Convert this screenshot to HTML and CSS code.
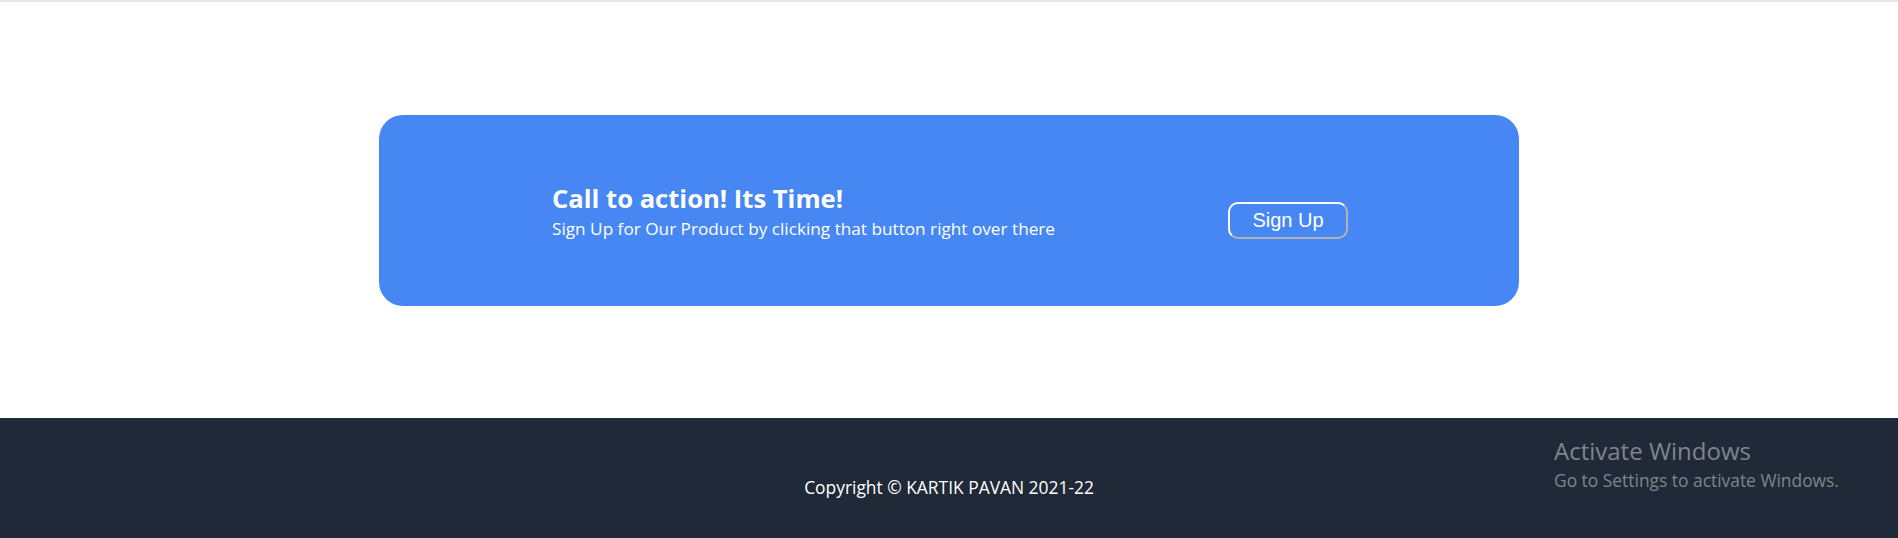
FILE: index.html
```html
<!DOCTYPE html>
<html lang="en">
<head>
<meta charset="utf-8">
<title>Call to action</title>
<link rel="stylesheet" href="styles.css">
</head>
<body>
<div class="topline"></div>
<main class="main">
  <section class="card">
    <div class="cta-text">
      <h2 class="cta-title">Call to action! Its Time!</h2>
      <p class="cta-sub">Sign Up for Our Product by clicking that button right over there</p>
    </div>
    <button class="cta-btn" type="button">Sign Up</button>
  </section>
</main>
<footer class="footer">
  <p class="copy">Copyright © KARTIK PAVAN 2021-22</p>
  <div class="watermark">
    <div class="wm-title">Activate Windows</div>
    <div class="wm-sub">Go to Settings to activate Windows.</div>
  </div>
</footer>
</body>
</html>
```

FILE: styles.css
```css
html, body {
  margin: 0;
  padding: 0;
}
body {
  font-family: "Open Sans", "Noto Sans", sans-serif;
  background: #ffffff;
  width: 1898px;
  height: 538px;
  overflow: hidden;
}
.topline {
  height: 2px;
  background: #e5e6eb;
}
.main {
  padding: 113px 0 112px;
}
.card {
  box-sizing: border-box;
  width: 1140px;
  height: 191px;
  margin: 0 auto;
  background: #4787f3;
  border-radius: 24px;
  display: flex;
  align-items: center;
  justify-content: space-between;
  padding: 0 171px 0 173px;
}
.cta-text {
  color: #ffffff;
  margin-top: 4px;
}
.cta-title {
  margin: 0;
  font-size: 25.6px;
  font-weight: 700;
  line-height: 30px;
}
.cta-sub {
  margin: 2px 0 0;
  font-size: 17.2px;
  line-height: 26px;
}
.cta-btn {
  box-sizing: border-box;
  height: 37px;
  width: 120px;
  padding: 0;
  font-family: "Liberation Sans", Arial, sans-serif;
  font-size: 20px;
  color: #ffffff;
  background: transparent;
  border: 2px solid;
  border-color: #ffffff #b3b3b3 #b3b3b3 #ffffff;
  border-radius: 10px;
  margin-top: 20px;
}
.footer {
  position: relative;
  height: 120px;
  background: #1f2937;
  display: flex;
  align-items: center;
  justify-content: center;
}
.copy {
  margin: 18px 0 0;
  color: #ffffff;
  font-size: 17.4px;
}
.watermark {
  position: absolute;
  left: 1554px;
  top: 17px;
  color: #7f848c;
}
.wm-title {
  font-size: 24px;
  line-height: 32px;
}
.wm-sub {
  font-size: 17.4px;
  line-height: 26px;
}
```
